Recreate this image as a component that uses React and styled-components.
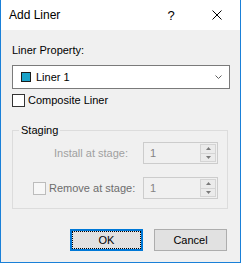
import React from 'react';
import styled, { createGlobalStyle } from 'styled-components';

const Global = createGlobalStyle`
	body {
		margin: 0;
		font-family: "Liberation Sans", Arial, sans-serif;
		background: #fff;
	}
`;

const Window = styled.div`
	width: 241px;
	height: 263px;
	box-sizing: border-box;
	border: 1px solid #1a80d8;
	border-top: none;
	display: flex;
	flex-direction: column;
	background: #f0f0f0;
`;

const TitleBar = styled.div`
	height: 30px;
	flex-shrink: 0;
	background: #fff;
	display: flex;
	align-items: stretch;
`;

const Title = styled.div`
	flex: 1;
	padding-left: 8px;
	font-size: 12px;
	line-height: 30px;
	color: #000;
`;

const CaptionButton = styled.div`
	width: 46px;
	display: flex;
	align-items: center;
	justify-content: center;
	font-size: 13px;
	color: #000;
`;

const Body = styled.div`
	flex: 1;
	display: flex;
	flex-direction: column;
	padding: 14px 10px 0 11px;
	font-size: 11px;
	line-height: 13px;
	color: #000;
`;

const Label = styled.div`
	height: 13px;
`;

const Combo = styled.div`
	margin-top: 8px;
	height: 24px;
	box-sizing: border-box;
	border: 1px solid #7a7a7a;
	background: #fff;
	display: flex;
	align-items: center;
	padding: 0 7px 0 8px;
`;

const Swatch = styled.span`
	width: 10px;
	height: 10px;
	box-sizing: border-box;
	border: 1px solid #1c1c1c;
	background: ${p => p.color};
	margin-right: 5px;
`;

const ComboText = styled.span`
	flex: 1;
	white-space: pre;
`;

const CheckRow = styled.label`
	display: flex;
	align-items: center;
	height: 13px;
	margin-top: ${p => p.top || 0}px;
	margin-left: ${p => p.indent || 0}px;
	color: ${p => p.color || '#000'};
`;

const Box = styled.span`
	width: 13px;
	height: 13px;
	box-sizing: border-box;
	border: 1px solid ${p => p.disabled ? '#bcbcbc' : '#333'};
	background: ${p => p.disabled ? '#f7f7f7' : '#fff'};
	margin-right: 3px;
	flex-shrink: 0;
`;

const Group = styled.fieldset`
	margin: 17px 2px 0 0;
	padding: 5px 9px 9px 0;
	border: 1px solid #dcdcdc;
	min-width: 0;
	display: flex;
	flex-direction: column;
	gap: 13px;
`;

const Legend = styled.legend`
	margin-left: 6px;
	padding: 0 2px;
	font-size: 11px;
	line-height: 13px;
`;

const StageRow = styled.div`
	display: flex;
	align-items: center;
	height: 22px;
`;

const StageLabel = styled.span`
	margin-left: ${p => p.indent || 0}px;
	color: ${p => p.color};
	white-space: nowrap;
`;

const Spin = styled.div`
	margin-left: auto;
	width: 75px;
	height: 22px;
	box-sizing: border-box;
	border: 1px solid #cccccc;
	background: #f0f0f0;
	display: flex;
	align-items: stretch;
	padding: 1px 1px 1px 6px;
`;

const SpinValue = styled.span`
	flex: 1;
	color: #838383;
	line-height: 18px;
`;

const SpinButtons = styled.div`
	width: 16px;
	display: flex;
	flex-direction: column;
`;

const SpinButton = styled.div`
	flex: 1;
	box-sizing: border-box;
	border: 1px solid #d4d4d4;
	background: #ebebeb;
	display: flex;
	align-items: center;
	justify-content: center;
	& + & {
		border-top: none;
	}
`;

const Buttons = styled.div`
	margin-top: 20px;
	margin-right: 3px;
	display: flex;
	justify-content: flex-end;
	gap: 11px;
`;

const Button = styled.div`
	width: 73px;
	height: 22px;
	box-sizing: border-box;
	background: #e1e1e1;
	border: ${p => p.primary ? '2px solid #0078d7' : '1px solid #adadad'};
	display: flex;
	padding: ${p => p.primary ? 0 : '1px'};
`;

const ButtonFace = styled.span`
	flex: 1;
	display: flex;
	align-items: center;
	justify-content: center;
	font-size: 11px;
	border: 1px ${p => p.focused ? 'dotted #000' : 'solid transparent'};
`;

const Arrow = ({ up }) => (
	<svg width="5" height="3" viewBox="0 0 5 3">
		<path d={up ? 'M0 3 L2.5 0 L5 3 Z' : 'M0 0 L2.5 3 L5 0 Z'} fill="#7a7a7a" />
	</svg>
);

const SpinBox = ({ value }) => (
	<Spin>
		<SpinValue>{value}</SpinValue>
		<SpinButtons>
			<SpinButton><Arrow up /></SpinButton>
			<SpinButton><Arrow /></SpinButton>
		</SpinButtons>
	</Spin>
);

const App = () => (
	<Window>
		<Global />
		<TitleBar>
			<Title>Add Liner</Title>
			<CaptionButton>?</CaptionButton>
			<CaptionButton>
				<svg width="10" height="10" viewBox="0 0 10 10">
					<path d="M0.5 0.5 L9.5 9.5 M9.5 0.5 L0.5 9.5" stroke="#000" strokeWidth="1" />
				</svg>
			</CaptionButton>
		</TitleBar>
		<Body>
			<Label>Liner Property:</Label>
			<Combo>
				<Swatch color="#1ba3c9" />
				<ComboText>Liner 1</ComboText>
				<svg width="7" height="4" viewBox="0 0 7 4">
					<path d="M0.5 0.5 L3.5 3.5 L6.5 0.5" stroke="#606060" fill="none" strokeWidth="1" />
				</svg>
			</Combo>
			<CheckRow top={5}>
				<Box />
				Composite Liner
			</CheckRow>
			<Group>
				<Legend>Staging</Legend>
				<StageRow>
					<StageLabel indent={41} color="#a0a0a0">Install at stage:</StageLabel>
					<SpinBox value="1" />
				</StageRow>
				<StageRow>
					<CheckRow indent={20} color="#6d6d6d">
						<Box disabled />
						Remove at stage:
					</CheckRow>
					<SpinBox value="1" />
				</StageRow>
			</Group>
			<Buttons>
				<Button primary><ButtonFace focused>OK</ButtonFace></Button>
				<Button><ButtonFace>Cancel</ButtonFace></Button>
			</Buttons>
		</Body>
	</Window>
);

export default App;
